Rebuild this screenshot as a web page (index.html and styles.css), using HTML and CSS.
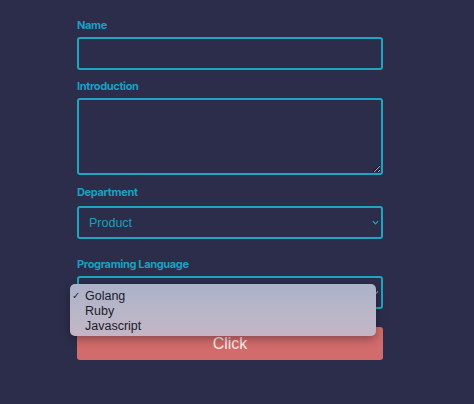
FILE: index.html
```html
<!DOCTYPE html>
<html>
<head>
<meta charset="utf-8">
<link rel="stylesheet" href="styles.css">
</head>
<body>
<form class="form">
  <label class="label">Name</label>
  <input class="field input" type="text">
  <label class="label">Introduction</label>
  <textarea class="field textarea"></textarea>
  <label class="label label-dept">Department</label>
  <div class="select-wrap select-dept">
    <select class="field select"><option>Product</option></select>
    <svg class="chevron" viewBox="0 0 8 5" width="7" height="5"><path d="M1 1l3 3 3-3" fill="none" stroke="#1ea5c0" stroke-width="1.4"/></svg>
  </div>
  <label class="label">Programing Language</label>
  <div class="select-wrap select-lang">
    <select class="field select"><option>Golang</option></select>
    <svg class="chevron" viewBox="0 0 8 5" width="7" height="5"><path d="M1 1l3 3 3-3" fill="none" stroke="#8a90a8" stroke-width="1.4"/></svg>
    <ul class="menu">
      <li class="menu-item"><span class="check">✓</span>Golang</li>
      <li class="menu-item"><span class="check"></span>Ruby</li>
      <li class="menu-item"><span class="check"></span>Javascript</li>
    </ul>
  </div>
  <button class="button" type="button">Click</button>
</form>
</body>
</html>
```
FILE: styles.css
```css
html, body {
  margin: 0;
  padding: 0;
  background: #2b2d4a;
  height: 100%;
}
.form {
  display: flex;
  flex-direction: column;
  width: 306px;
  padding: 19px 0 0 77px;
}
.label {
  display: block;
  font-family: Inter, "Liberation Sans", sans-serif;
  font-weight: 700;
  font-size: 11px;
  line-height: 13px;
  letter-spacing: -0.35px;
  color: #1aa0c1;
  margin-bottom: 5px;
}
.label-dept {
  margin-bottom: 7px;
}
.field {
  box-sizing: border-box;
  width: 306px;
  background: transparent;
  border: 2px solid #1ea5c0;
  border-radius: 3px;
  margin: 0;
  outline: none;
}
.input {
  height: 33px;
  margin-bottom: 10px;
}
.textarea {
  height: 77px;
  margin-bottom: 11px;
}
.select-wrap {
  position: relative;
  width: 306px;
  height: 33px;
}
.select-dept {
  margin-bottom: 19px;
}
.select-lang {
  margin-bottom: 18px;
}
.select {
  display: block;
  height: 33px;
  -webkit-appearance: none;
  appearance: none;
  padding: 0 0 0 10px;
  font-family: "Liberation Sans", Arial, sans-serif;
  font-size: 12.5px;
  color: #1f9ebd;
}
.chevron {
  position: absolute;
  right: 4px;
  top: 14px;
}
.menu {
  position: absolute;
  left: -7px;
  top: 8px;
  width: 306px;
  margin: 0;
  padding: 4px 0 3px;
  list-style: none;
  border-radius: 5px;
  background: linear-gradient(180deg, #abb2c9 0%, #b9b6c8 55%, #c4b5c5 100%);
  box-shadow: 0 3px 8px rgba(10, 10, 25, 0.35);
  z-index: 2;
}
.menu-item {
  display: flex;
  align-items: center;
  height: 15px;
  font-family: "Liberation Sans", Arial, sans-serif;
  font-size: 12.5px;
  color: #1c1c2c;
}
.check {
  width: 13px;
  padding-left: 2px;
  font-size: 10px;
  color: #2a2a3a;
}
.button {
  width: 306px;
  height: 33px;
  border: none;
  border-radius: 3px;
  background: #d26b6b;
  color: #f6eaea;
  font-family: "Liberation Sans", Arial, sans-serif;
  font-size: 16px;
  padding: 0;
}
```
